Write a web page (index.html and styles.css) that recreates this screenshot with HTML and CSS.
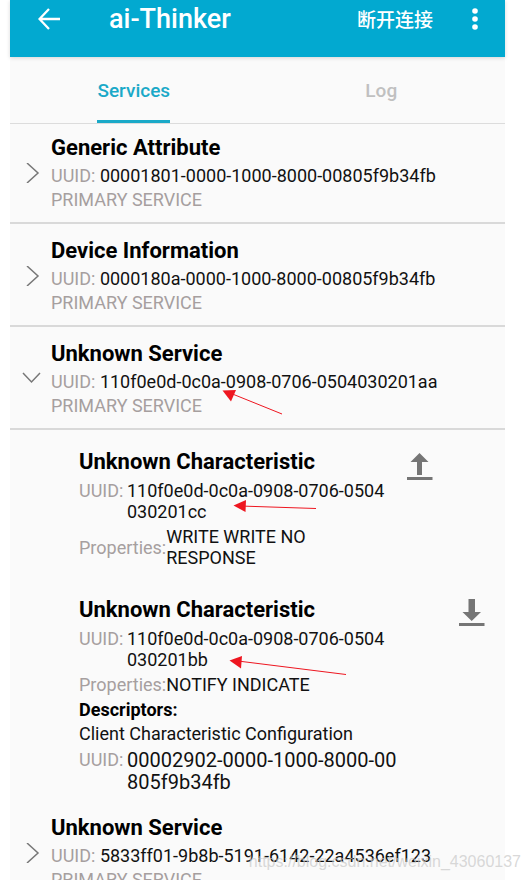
FILE: index.html
```html
<!DOCTYPE html>
<html lang="en">
<head>
    <meta charset="UTF-8">
    <meta name="viewport" content="width=device-width, initial-scale=1.0">
    <title>ai-Thinker</title>
    <link rel="stylesheet" href="styles.css">
</head>
<body>
<div class="screen">
    <header class="toolbar">
        <button type="button" class="icon-btn" aria-label="Back">
            <svg width="22" height="22" viewBox="0 0 22 22" fill="none" stroke="#fff" stroke-width="2.3">
                <path d="M22 11H2M11 1L1.500 11L11 21"/>
            </svg>
        </button>
        <h1 class="device-name">ai-Thinker</h1>
        <button type="button" class="disconnect" lang="zh">断开连接</button>
        <button type="button" class="icon-btn" aria-label="More">
            <svg width="6" height="22" viewBox="0 0 6 22" fill="#fff">
                <circle cx="3" cy="3" r="2.800"/>
                <circle cx="3" cy="11" r="2.800"/>
                <circle cx="3" cy="19" r="2.800"/>
            </svg>
        </button>
    </header>

    <nav class="tabs">
        <div class="tab-cell"><button type="button" class="tab active">Services</button></div>
        <div class="tab-cell"><button type="button" class="tab">Log</button></div>
    </nav>

    <main class="services">
        <section class="service">
            <button type="button" class="icon-btn" aria-label="Expand">
                <svg class="chevron" viewBox="0 0 20 20"><path d="M5 0L16 10L5 20"/></svg>
            </button>
            <div class="service-info">
                <h2 class="name">Generic Attribute</h2>
                <p class="line"><span class="label">UUID:</span> 00001801-0000-1000-8000-00805f9b34fb</p>
                <p class="line label">PRIMARY SERVICE</p>
            </div>
        </section>

        <section class="service">
            <button type="button" class="icon-btn" aria-label="Expand">
                <svg class="chevron" viewBox="0 0 20 20"><path d="M5 0L16 10L5 20"/></svg>
            </button>
            <div class="service-info">
                <h2 class="name">Device Information</h2>
                <p class="line"><span class="label">UUID:</span> 0000180a-0000-1000-8000-00805f9b34fb</p>
                <p class="line label">PRIMARY SERVICE</p>
            </div>
        </section>

        <section class="service">
            <button type="button" class="icon-btn" aria-label="Collapse">
                <svg class="chevron" viewBox="0 0 20 20"><path d="M1 4L9.500 13L18 4"/></svg>
            </button>
            <div class="service-info">
                <h2 class="name">Unknown Service</h2>
                <p class="line"><span class="label">UUID:</span> 110f0e0d-0c0a-0908-0706-0504030201aa</p>
                <p class="line label">PRIMARY SERVICE</p>
            </div>
        </section>

        <div class="characteristics">
            <section class="characteristic">
                <div class="characteristic-info">
                    <h3 class="name">Unknown Characteristic</h3>
                    <div class="field">
                        <span class="label key">UUID:</span>
                        <span class="uuid">110f0e0d-0c0a-0908-0706-0504030201cc</span>
                    </div>
                    <div class="field props">
                        <span class="label">Properties:</span>
                        <span>WRITE WRITE NO RESPONSE</span>
                    </div>
                </div>
                <button type="button" class="icon-btn write" aria-label="Write">
                    <svg width="26" height="28" viewBox="0 0 26 28" fill="#757575">
                        <path d="M12.500 0L21.500 9H15V22H10V9H3.500Z"/>
                        <path d="M0 24H25.500V27H0Z"/>
                    </svg>
                </button>
            </section>

            <section class="characteristic">
                <div class="characteristic-info">
                    <h3 class="name">Unknown Characteristic</h3>
                    <div class="field">
                        <span class="label key">UUID:</span>
                        <span class="uuid">110f0e0d-0c0a-0908-0706-0504030201bb</span>
                    </div>
                    <div class="field props">
                        <span class="label">Properties:</span>
                        <span>NOTIFY INDICATE</span>
                    </div>
                    <h4 class="line descriptors">Descriptors:</h4>
                    <p class="line">Client Characteristic Configuration</p>
                    <div class="field descriptor">
                        <span class="label key">UUID:</span>
                        <span class="uuid">00002902-0000-1000-8000-00805f9b34fb</span>
                    </div>
                </div>
                <button type="button" class="icon-btn notify" aria-label="Notify">
                    <svg width="26" height="28" viewBox="0 0 26 28" fill="#757575">
                        <path d="M9.500 0H16V13H22L12.700 22L3.500 13H9.500Z"/>
                        <path d="M0 24H25.500V27H0Z"/>
                    </svg>
                </button>
            </section>
        </div>

        <section class="service">
            <button type="button" class="icon-btn" aria-label="Expand">
                <svg class="chevron" viewBox="0 0 20 20"><path d="M5 0L16 10L5 20"/></svg>
            </button>
            <div class="service-info">
                <h2 class="name">Unknown Service</h2>
                <p class="line"><span class="label">UUID:</span> 5833ff01-9b8b-5191-6142-22a4536ef123</p>
                <p class="line label">PRIMARY SERVICE</p>
            </div>
        </section>
    </main>
</div>

<!-- red arrows drawn over the list -->
<svg class="arrows" width="360" height="690" viewBox="0 0 360 690" fill="#ee1620" stroke="#ee1620">
    <path d="M230 393L282 414M240 506L316 508.500M238 661L346 674.500"/>
    <path stroke="none" d="M222.500 390.500L236 390L231 401.500Z"/>
    <path stroke="none" d="M233.500 505.500L246 500L245.500 512Z"/>
    <path stroke="none" d="M229.500 660.500L242 656L241 668.500Z"/>
</svg>

<div class="watermark">https://blog.csdn.net/weixin_43060137</div>
</body>
</html>
```

FILE: styles.css
```css
* {
    box-sizing: border-box;
}

body {
    position: relative;
    height: 100vh;
    margin: 0;
    overflow: hidden;
    background: #fff;
    color: #111;
    font-family: Roboto, "Noto Sans CJK SC", sans-serif;
    font-size: 18px;
}

h1, h2, h3, h4, p {
    margin: 0;
}

button {
    padding: 0;
    border: 0;
    background: none;
    font-family: inherit;
    cursor: pointer;
}

.icon-btn {
    display: flex;
}

.screen {
    margin: 0 25px 0 10px;
    min-height: 100%;
    background: #fafafa;
}

/* Toolbar */
.toolbar {
    position: relative;
    display: flex;
    align-items: center;
    height: 57px;
    padding: 0 27px 20px 28px;
    background: #02a9d0;
    box-shadow: 0 1px 4px rgba(0, 0, 0, .15);
    color: #fff;
}

.device-name {
    flex: 1;
    margin-left: 49px;
    font-size: 27px;
    font-weight: 500;
}

.disconnect {
    margin-right: 39px;
    color: #fff;
    font-size: 19px;
    font-weight: 500;
}

/* Tabs */
.tabs {
    display: flex;
    height: 67px;
    border-bottom: 1px solid #dcdcdc;
}

.tab-cell {
    display: flex;
    flex: 1;
    justify-content: center;
}

.tab {
    padding-top: 4px;
    border-bottom: 3px solid transparent;
    color: #c0c0c0;
    font-size: 19px;
    font-weight: 500;
}

.tab.active {
    border-bottom-color: #1aa9c8;
    color: #1aa9c8;
}

/* Services */
.service {
    display: flex;
    align-items: center;
    gap: 9px;
    padding: 13px 12px 10px;
    border-bottom: 2px solid #d9d9d9;
}

.service:first-child {
    padding-top: 10px;
}

.chevron {
    width: 20px;
    height: 20px;
    fill: none;
    stroke: #777;
    stroke-width: 1.5;
}

.name {
    color: #000;
    font-size: 22px;
    font-weight: 700;
    line-height: 28px;
}

.service .name {
    margin-bottom: 2px;
}

.line {
    line-height: 24px;
}

.label {
    color: #a69f9f;
}

/* Characteristics */
.characteristics {
    padding: 18px 20px 8px 69px;
}

.characteristic {
    display: grid;
    grid-template-columns: 1fr 26px 26px;
    column-gap: 26px;
    align-items: start;
}

.characteristic + .characteristic {
    margin-top: 28px;
}

.characteristic-info {
    margin-right: -12px;
}

.write {
    margin-top: 5px;
}

.notify {
    grid-column: 3;
    margin-top: 3px;
}

.field {
    display: flex;
    margin-top: 4px;
    line-height: 21px;
}

.props {
    align-items: center;
}

.key {
    flex: 0 0 48px;
}

.uuid {
    word-break: break-all;
}

.descriptors {
    margin-top: 3px;
    color: #000;
    font-size: 18px;
}

.descriptor {
    margin-top: 3px;
    margin-right: -8px;
    line-height: 22px;
}

.descriptor .uuid {
    font-size: 20px;
}

.arrows {
    position: absolute;
    top: 0;
    left: 0;
    pointer-events: none;
}

.watermark {
    position: absolute;
    right: 9px;
    bottom: 8px;
    color: rgba(200, 200, 200, .7);
    font-family: "Liberation Sans", Arial, sans-serif;
    font-size: 16px;
    line-height: 20px;
}
```
